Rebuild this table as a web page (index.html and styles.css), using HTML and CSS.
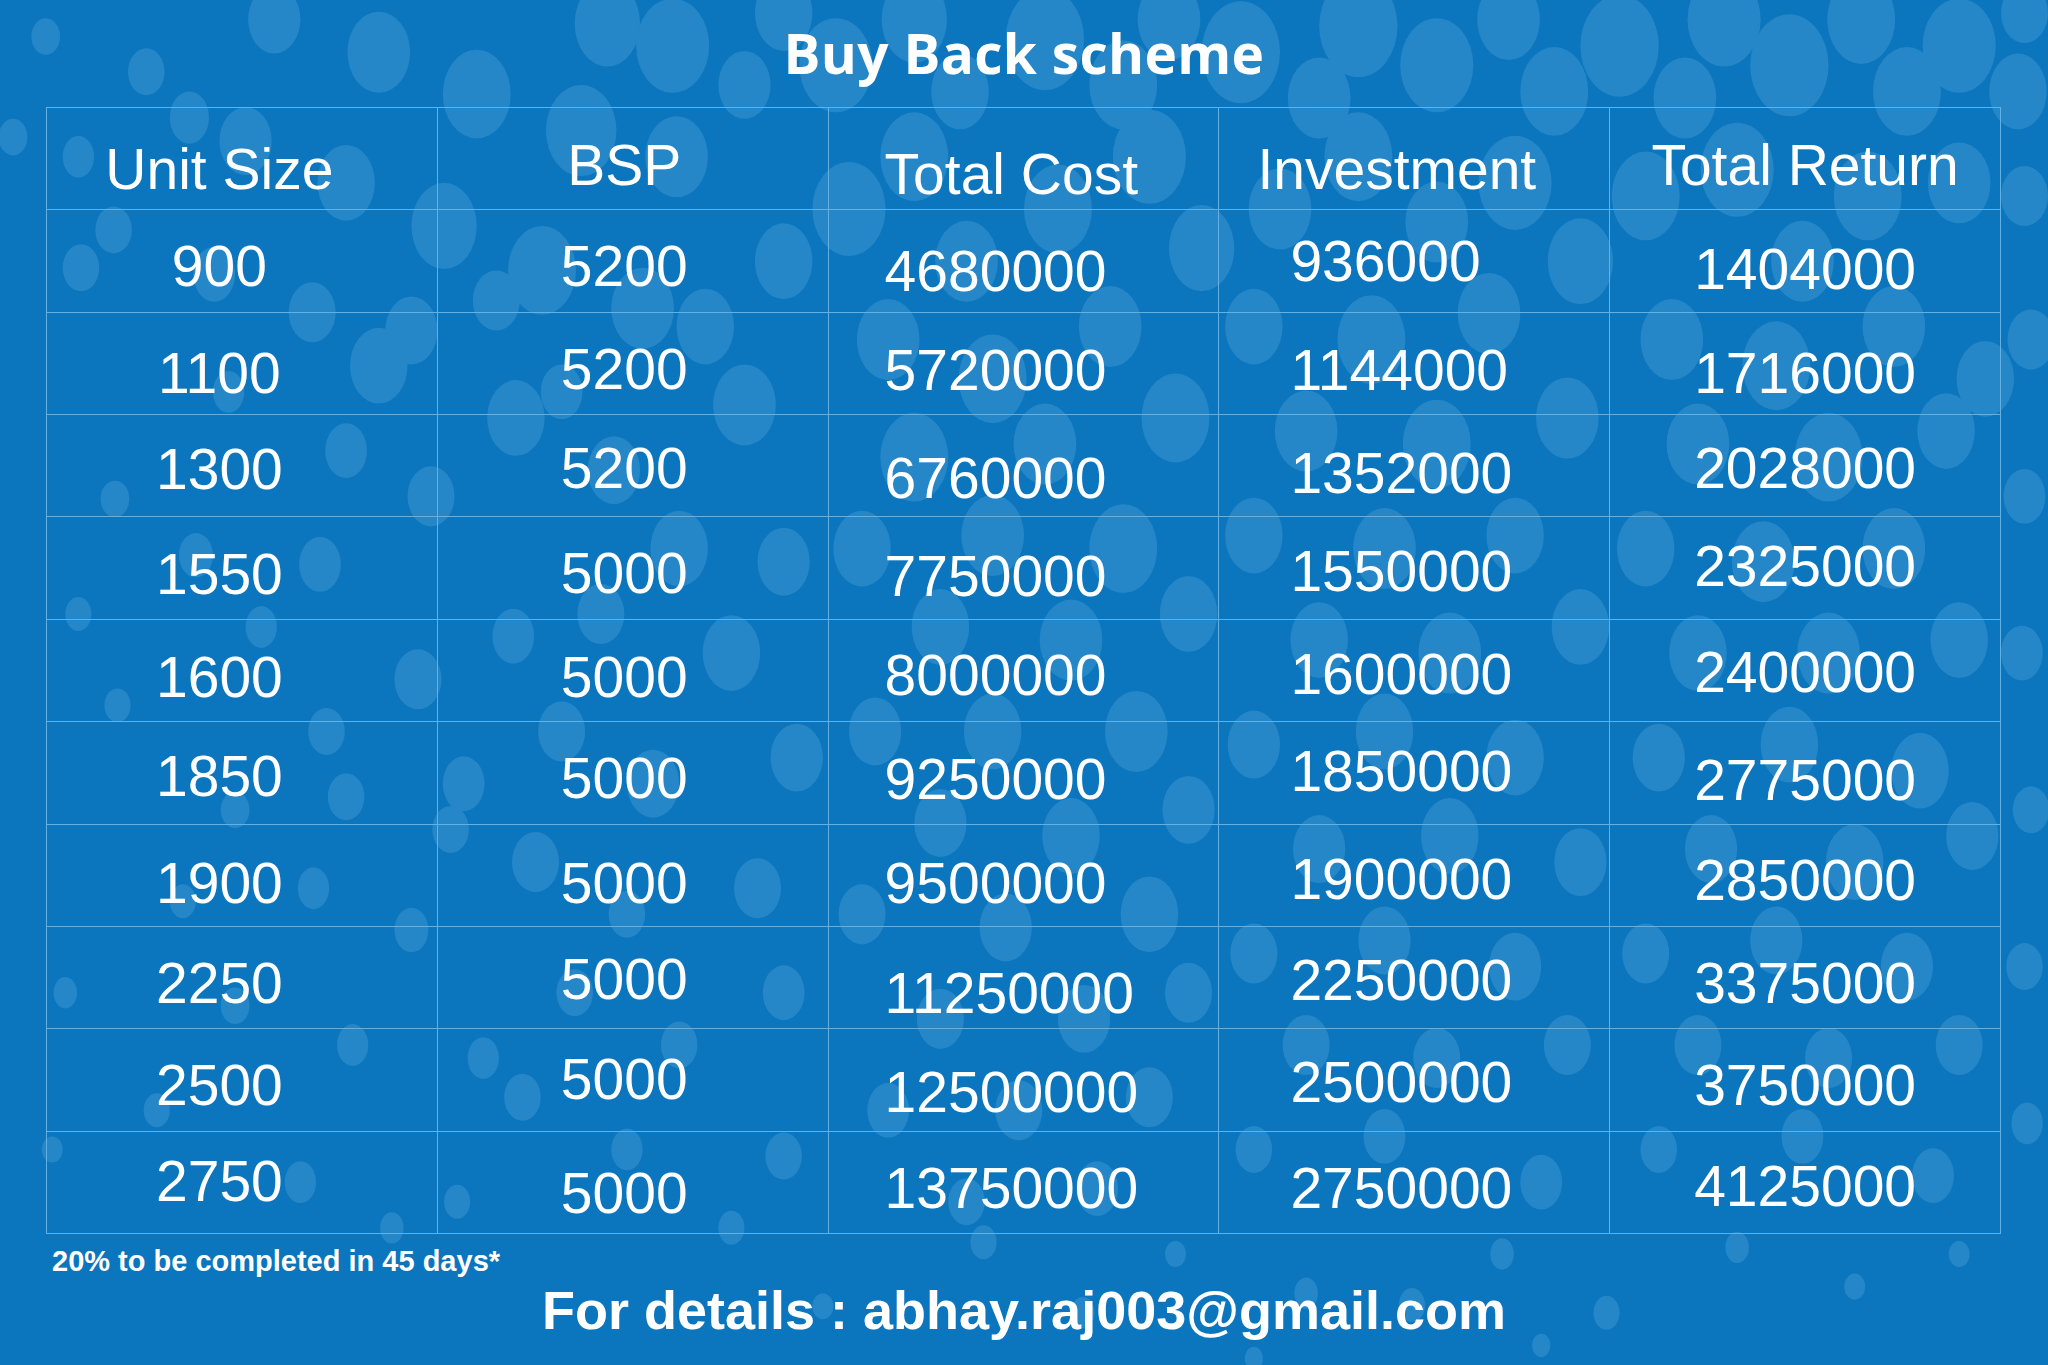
FILE: index.html
```html
<!DOCTYPE html>
<html lang="en">
<head>
<meta charset="utf-8">
<title>Buy Back scheme</title>
<link rel="stylesheet" href="styles.css">
</head>
<body>
<svg class="bubbles" viewBox="0 0 1568 1045" preserveAspectRatio="none" aria-hidden="true">
<g class="b">
<ellipse cx="35" cy="28" rx="11" ry="14"/><ellipse cx="112" cy="55" rx="14" ry="18"/><ellipse cx="210" cy="15" rx="20" ry="26"/><ellipse cx="290" cy="40" rx="24" ry="31"/><ellipse cx="365" cy="72" rx="26" ry="34"/><ellipse cx="465" cy="18" rx="25" ry="33"/><ellipse cx="515" cy="35" rx="28" ry="36"/><ellipse cx="445" cy="100" rx="27" ry="35"/><ellipse cx="600" cy="10" rx="22" ry="29"/><ellipse cx="570" cy="65" rx="20" ry="26"/><ellipse cx="640" cy="50" rx="28" ry="36"/><ellipse cx="700" cy="15" rx="25" ry="33"/><ellipse cx="735" cy="70" rx="22" ry="29"/><ellipse cx="800" cy="30" rx="30" ry="39"/><ellipse cx="860" cy="65" rx="26" ry="34"/><ellipse cx="895" cy="15" rx="24" ry="31"/><ellipse cx="950" cy="40" rx="30" ry="39"/><ellipse cx="1010" cy="75" rx="24" ry="31"/><ellipse cx="1040" cy="20" rx="30" ry="39"/><ellipse cx="1100" cy="50" rx="28" ry="36"/><ellipse cx="1155" cy="15" rx="24" ry="31"/><ellipse cx="1190" cy="70" rx="26" ry="34"/><ellipse cx="1240" cy="35" rx="30" ry="39"/><ellipse cx="1290" cy="75" rx="24" ry="31"/><ellipse cx="1320" cy="15" rx="28" ry="36"/><ellipse cx="1370" cy="50" rx="30" ry="39"/><ellipse cx="1425" cy="15" rx="26" ry="34"/><ellipse cx="1460" cy="70" rx="26" ry="34"/><ellipse cx="1500" cy="35" rx="28" ry="36"/><ellipse cx="1545" cy="70" rx="22" ry="29"/><ellipse cx="1550" cy="10" rx="18" ry="23"/><ellipse cx="10" cy="105" rx="11" ry="14"/><ellipse cx="60" cy="120" rx="12" ry="16"/><ellipse cx="145" cy="90" rx="15" ry="20"/><ellipse cx="188" cy="108" rx="20" ry="26"/><ellipse cx="265" cy="140" rx="22" ry="29"/><ellipse cx="340" cy="173" rx="25" ry="33"/><ellipse cx="415" cy="207" rx="26" ry="34"/><ellipse cx="492" cy="236" rx="24" ry="31"/><ellipse cx="518" cy="120" rx="24" ry="31"/><ellipse cx="87" cy="176" rx="14" ry="18"/><ellipse cx="164" cy="210" rx="16" ry="21"/><ellipse cx="239" cy="239" rx="18" ry="23"/><ellipse cx="315" cy="253" rx="20" ry="26"/>
<ellipse cx="62" cy="205" rx="14" ry="18"/><ellipse cx="290" cy="280" rx="22" ry="29"/><ellipse cx="175" cy="300" rx="12" ry="16"/><ellipse cx="88" cy="382" rx="11" ry="14"/><ellipse cx="265" cy="345" rx="16" ry="21"/><ellipse cx="150" cy="425" rx="13" ry="17"/><ellipse cx="245" cy="432" rx="16" ry="21"/><ellipse cx="60" cy="470" rx="10" ry="13"/><ellipse cx="200" cy="480" rx="12" ry="16"/><ellipse cx="320" cy="520" rx="18" ry="23"/><ellipse cx="250" cy="560" rx="14" ry="18"/><ellipse cx="90" cy="540" rx="10" ry="13"/><ellipse cx="265" cy="610" rx="14" ry="18"/><ellipse cx="180" cy="620" rx="11" ry="14"/><ellipse cx="140" cy="690" rx="10" ry="13"/><ellipse cx="240" cy="680" rx="12" ry="16"/><ellipse cx="315" cy="712" rx="13" ry="17"/><ellipse cx="50" cy="760" rx="9" ry="12"/><ellipse cx="180" cy="770" rx="11" ry="14"/><ellipse cx="270" cy="800" rx="12" ry="16"/><ellipse cx="120" cy="850" rx="10" ry="13"/><ellipse cx="40" cy="880" rx="8" ry="10"/><ellipse cx="230" cy="905" rx="12" ry="16"/><ellipse cx="300" cy="940" rx="9" ry="12"/>
<ellipse cx="380" cy="230" rx="18" ry="23"/><ellipse cx="395" cy="320" rx="22" ry="29"/><ellipse cx="330" cy="380" rx="18" ry="23"/><ellipse cx="430" cy="300" rx="16" ry="21"/><ellipse cx="540" cy="250" rx="22" ry="29"/><ellipse cx="600" cy="200" rx="22" ry="29"/><ellipse cx="570" cy="310" rx="24" ry="31"/><ellipse cx="470" cy="360" rx="20" ry="26"/><ellipse cx="520" cy="420" rx="22" ry="29"/><ellipse cx="393" cy="487" rx="16" ry="21"/><ellipse cx="600" cy="430" rx="20" ry="26"/><ellipse cx="460" cy="470" rx="18" ry="23"/><ellipse cx="560" cy="500" rx="22" ry="29"/><ellipse cx="355" cy="600" rx="16" ry="21"/><ellipse cx="430" cy="560" rx="18" ry="23"/><ellipse cx="500" cy="600" rx="20" ry="26"/><ellipse cx="610" cy="580" rx="20" ry="26"/><ellipse cx="345" cy="635" rx="14" ry="18"/><ellipse cx="410" cy="660" rx="18" ry="23"/><ellipse cx="480" cy="700" rx="14" ry="18"/><ellipse cx="580" cy="680" rx="18" ry="23"/><ellipse cx="440" cy="760" rx="14" ry="18"/><ellipse cx="370" cy="810" rx="12" ry="16"/><ellipse cx="520" cy="800" rx="14" ry="18"/><ellipse cx="600" cy="760" rx="16" ry="21"/><ellipse cx="400" cy="840" rx="14" ry="18"/><ellipse cx="480" cy="880" rx="12" ry="16"/><ellipse cx="600" cy="885" rx="14" ry="18"/><ellipse cx="350" cy="920" rx="10" ry="13"/><ellipse cx="560" cy="940" rx="10" ry="13"/>
<ellipse cx="650" cy="160" rx="28" ry="36"/><ellipse cx="700" cy="120" rx="26" ry="34"/><ellipse cx="740" cy="200" rx="24" ry="31"/><ellipse cx="810" cy="160" rx="26" ry="34"/><ellipse cx="880" cy="120" rx="28" ry="36"/><ellipse cx="920" cy="190" rx="25" ry="33"/><ellipse cx="680" cy="260" rx="24" ry="31"/><ellipse cx="760" cy="290" rx="26" ry="34"/><ellipse cx="850" cy="250" rx="24" ry="31"/><ellipse cx="700" cy="350" rx="26" ry="34"/><ellipse cx="800" cy="340" rx="24" ry="31"/><ellipse cx="900" cy="320" rx="26" ry="34"/><ellipse cx="660" cy="420" rx="22" ry="29"/><ellipse cx="760" cy="410" rx="24" ry="31"/><ellipse cx="860" cy="420" rx="26" ry="34"/><ellipse cx="720" cy="480" rx="22" ry="29"/><ellipse cx="820" cy="490" rx="24" ry="31"/><ellipse cx="910" cy="470" rx="22" ry="29"/><ellipse cx="670" cy="560" rx="20" ry="26"/><ellipse cx="760" cy="560" rx="22" ry="29"/><ellipse cx="870" cy="560" rx="24" ry="31"/><ellipse cx="720" cy="630" rx="20" ry="26"/><ellipse cx="820" cy="640" rx="22" ry="29"/><ellipse cx="910" cy="620" rx="20" ry="26"/><ellipse cx="660" cy="700" rx="18" ry="23"/><ellipse cx="770" cy="710" rx="20" ry="26"/><ellipse cx="880" cy="700" rx="22" ry="29"/><ellipse cx="720" cy="780" rx="18" ry="23"/><ellipse cx="830" cy="780" rx="20" ry="26"/><ellipse cx="910" cy="760" rx="18" ry="23"/><ellipse cx="680" cy="850" rx="16" ry="21"/><ellipse cx="780" cy="850" rx="18" ry="23"/><ellipse cx="880" cy="840" rx="18" ry="23"/><ellipse cx="740" cy="920" rx="14" ry="18"/><ellipse cx="840" cy="910" rx="16" ry="21"/>
<ellipse cx="980" cy="160" rx="24" ry="31"/><ellipse cx="1040" cy="120" rx="26" ry="34"/><ellipse cx="1100" cy="170" rx="24" ry="31"/><ellipse cx="1160" cy="140" rx="28" ry="36"/><ellipse cx="1210" cy="200" rx="25" ry="33"/><ellipse cx="960" cy="250" rx="22" ry="29"/><ellipse cx="1050" cy="260" rx="26" ry="34"/><ellipse cx="1140" cy="240" rx="24" ry="31"/><ellipse cx="1000" cy="330" rx="24" ry="31"/><ellipse cx="1100" cy="340" rx="26" ry="34"/><ellipse cx="1200" cy="320" rx="24" ry="31"/><ellipse cx="960" cy="410" rx="22" ry="29"/><ellipse cx="1060" cy="420" rx="24" ry="31"/><ellipse cx="1160" cy="410" rx="22" ry="29"/><ellipse cx="1010" cy="490" rx="22" ry="29"/><ellipse cx="1110" cy="500" rx="24" ry="31"/><ellipse cx="1210" cy="480" rx="22" ry="29"/><ellipse cx="960" cy="570" rx="20" ry="26"/><ellipse cx="1060" cy="560" rx="22" ry="29"/><ellipse cx="1160" cy="580" rx="22" ry="29"/><ellipse cx="1010" cy="650" rx="20" ry="26"/><ellipse cx="1110" cy="640" rx="22" ry="29"/><ellipse cx="1210" cy="660" rx="20" ry="26"/><ellipse cx="960" cy="730" rx="18" ry="23"/><ellipse cx="1060" cy="720" rx="20" ry="26"/><ellipse cx="1160" cy="740" rx="20" ry="26"/><ellipse cx="1000" cy="800" rx="18" ry="23"/><ellipse cx="1100" cy="810" rx="18" ry="23"/><ellipse cx="1200" cy="800" rx="18" ry="23"/><ellipse cx="960" cy="880" rx="14" ry="18"/><ellipse cx="1060" cy="870" rx="16" ry="21"/><ellipse cx="1180" cy="905" rx="16" ry="21"/>
<ellipse cx="1260" cy="150" rx="26" ry="34"/><ellipse cx="1330" cy="130" rx="28" ry="36"/><ellipse cx="1380" cy="200" rx="24" ry="31"/><ellipse cx="1430" cy="150" rx="26" ry="34"/><ellipse cx="1500" cy="140" rx="24" ry="31"/><ellipse cx="1280" cy="260" rx="24" ry="31"/><ellipse cx="1360" cy="280" rx="26" ry="34"/><ellipse cx="1450" cy="250" rx="24" ry="31"/><ellipse cx="1520" cy="290" rx="22" ry="29"/><ellipse cx="1300" cy="340" rx="24" ry="31"/><ellipse cx="1400" cy="350" rx="26" ry="34"/><ellipse cx="1490" cy="330" rx="22" ry="29"/><ellipse cx="1260" cy="420" rx="22" ry="29"/><ellipse cx="1350" cy="430" rx="24" ry="31"/><ellipse cx="1450" cy="420" rx="24" ry="31"/><ellipse cx="1300" cy="500" rx="22" ry="29"/><ellipse cx="1400" cy="500" rx="24" ry="31"/><ellipse cx="1500" cy="490" rx="22" ry="29"/><ellipse cx="1270" cy="580" rx="20" ry="26"/><ellipse cx="1370" cy="570" rx="22" ry="29"/><ellipse cx="1470" cy="590" rx="22" ry="29"/><ellipse cx="1310" cy="650" rx="20" ry="26"/><ellipse cx="1420" cy="660" rx="22" ry="29"/><ellipse cx="1510" cy="640" rx="20" ry="26"/><ellipse cx="1260" cy="730" rx="18" ry="23"/><ellipse cx="1360" cy="720" rx="20" ry="26"/><ellipse cx="1460" cy="740" rx="20" ry="26"/><ellipse cx="1300" cy="800" rx="18" ry="23"/><ellipse cx="1400" cy="810" rx="18" ry="23"/><ellipse cx="1500" cy="800" rx="18" ry="23"/><ellipse cx="1270" cy="880" rx="14" ry="18"/><ellipse cx="1380" cy="870" rx="16" ry="21"/><ellipse cx="1480" cy="900" rx="16" ry="21"/>
<ellipse cx="1550" cy="150" rx="18" ry="23"/><ellipse cx="1555" cy="260" rx="18" ry="23"/><ellipse cx="1550" cy="380" rx="16" ry="21"/><ellipse cx="1548" cy="500" rx="16" ry="21"/><ellipse cx="1555" cy="620" rx="14" ry="18"/><ellipse cx="1550" cy="740" rx="14" ry="18"/><ellipse cx="1552" cy="860" rx="12" ry="16"/>
<ellipse cx="630" cy="1000" rx="8" ry="10"/><ellipse cx="753" cy="951" rx="10" ry="13"/><ellipse cx="829" cy="1005" rx="9" ry="12"/><ellipse cx="900" cy="960" rx="8" ry="10"/><ellipse cx="1000" cy="990" rx="9" ry="12"/><ellipse cx="1081" cy="999" rx="10" ry="13"/><ellipse cx="1150" cy="960" rx="9" ry="12"/><ellipse cx="1230" cy="1005" rx="10" ry="13"/><ellipse cx="1330" cy="955" rx="9" ry="12"/><ellipse cx="1420" cy="985" rx="8" ry="10"/><ellipse cx="1500" cy="960" rx="8" ry="10"/><ellipse cx="1180" cy="1030" rx="7" ry="9"/><ellipse cx="960" cy="1040" rx="7" ry="9"/>
</g>
</svg>

<main class="page">
  <h1 class="title">Buy Back scheme</h1>

  <div class="grid">
    <div class="cell c1"><span class="s11">Unit Size</span></div>
    <div class="cell c2"><span class="s7">BSP</span></div>
    <div class="cell c3"><span class="s16">Total Cost</span></div>
    <div class="cell c4 head4"><span class="s11">Investment</span></div>
    <div class="cell c5"><span class="s7">Total Return</span></div>

    <div class="cell c1"><span class="s6">900</span></div>
    <div class="cell c2"><span class="s6">5200</span></div>
    <div class="cell c3"><span class="s11">4680000</span></div>
    <div class="cell c4"><span class="s1">936000</span></div>
    <div class="cell c5"><span class="s9">1404000</span></div>

    <div class="cell c1"><span class="s10">1100</span></div>
    <div class="cell c2"><span class="s6">5200</span></div>
    <div class="cell c3"><span class="s7">5720000</span></div>
    <div class="cell c4"><span class="s7">1144000</span></div>
    <div class="cell c5"><span class="s10">1716000</span></div>

    <div class="cell c1"><span class="s4">1300</span></div>
    <div class="cell c2"><span class="s3">5200</span></div>
    <div class="cell c3"><span class="s13">6760000</span></div>
    <div class="cell c4"><span class="s8">1352000</span></div>
    <div class="cell c5"><span class="s3">2028000</span></div>

    <div class="cell c1"><span class="s7">1550</span></div>
    <div class="cell c2"><span class="s6">5000</span></div>
    <div class="cell c3"><span class="s9">7750000</span></div>
    <div class="cell c4"><span class="s4">1550000</span></div>
    <div class="cell c5"><span class="sm1">2325000</span></div>

    <div class="cell c1"><span class="s7">1600</span></div>
    <div class="cell c2"><span class="s7">5000</span></div>
    <div class="cell c3"><span class="s5">8000000</span></div>
    <div class="cell c4"><span class="s4">1600000</span></div>
    <div class="cell c5"><span class="s2">2400000</span></div>

    <div class="cell c1"><span class="s4">1850</span></div>
    <div class="cell c2"><span class="s6">5000</span></div>
    <div class="cell c3"><span class="s7">9250000</span></div>
    <div class="cell c4"><span class="sm1">1850000</span></div>
    <div class="cell c5"><span class="s8">2775000</span></div>

    <div class="cell c1"><span class="s9">1900</span></div>
    <div class="cell c2"><span class="s9">5000</span></div>
    <div class="cell c3"><span class="s9">9500000</span></div>
    <div class="cell c4"><span class="s5">1900000</span></div>
    <div class="cell c5"><span class="s6">2850000</span></div>

    <div class="cell c1"><span class="s6">2250</span></div>
    <div class="cell c2"><span class="s2">5000</span></div>
    <div class="cell c3"><span class="s16">11250000</span></div>
    <div class="cell c4"><span class="s3">2250000</span></div>
    <div class="cell c5"><span class="s6">3375000</span></div>

    <div class="cell c1"><span class="s6">2500</span></div>
    <div class="cell c2"><span class="s0">5000</span></div>
    <div class="cell c3"><span class="s13">12500000</span></div>
    <div class="cell c4"><span class="s3">2500000</span></div>
    <div class="cell c5"><span class="s6">3750000</span></div>

    <div class="cell c1"><span class="sm1">2750</span></div>
    <div class="cell c2"><span class="s11">5000</span></div>
    <div class="cell c3"><span class="s6">13750000</span></div>
    <div class="cell c4"><span class="s6">2750000</span></div>
    <div class="cell c5"><span class="s4">4125000</span></div>
  </div>

  <p class="note">20% to be completed in 45 days*</p>
  <p class="contact">For details : abhay.raj003@gmail.com</p>
</main>
</body>
</html>
```

FILE: styles.css
```css
* { box-sizing: border-box; }

html, body {
  margin: 0;
  padding: 0;
}

body {
  width: 2048px;
  height: 1365px;
  overflow: hidden;
  position: relative;
  background: #0b76bd;
  color: #ffffff;
  font-family: "Liberation Sans", Arial, sans-serif;
}

.bubbles {
  position: absolute;
  left: 0;
  top: 0;
  width: 2048px;
  height: 1365px;
  z-index: 0;
}

.b { fill: #2587c8; }

.page {
  position: relative;
  z-index: 1;
  display: flex;
  flex-direction: column;
  align-items: center;
}

.title {
  margin: 23px 0 0;
  height: 60px;
  line-height: 60px;
  font-family: "Open Sans", "Noto Sans", sans-serif;
  font-weight: 700;
  font-size: 55px;
  letter-spacing: 0.3px;
}

.grid {
  margin-top: 24px;
  align-self: flex-start;
  margin-left: 46px;
  width: 1955px;
  display: grid;
  grid-template-columns: repeat(5, 1fr);
  grid-auto-rows: 102.36px;
  border-top: 1px solid #63b0e2;
  border-left: 1px solid #63b0e2;
}

.cell {
  display: flex;
  align-items: center;
  justify-content: center;
  border-right: 1px solid #63b0e2;
  border-bottom: 1px solid #63b0e2;
  font-size: 57px;
  white-space: nowrap;
}

.cell span { display: block; line-height: 1.149; }

.c1 { padding-right: 45px; }
.c2 { padding-right: 17px; }
.c3 { justify-content: flex-start; padding-left: 56px; }
.c4 { justify-content: flex-start; padding-left: 71px; }
.c4.head4 { padding-left: 38px; }

.sm1 { margin-top: -2px; }
.s0 { margin-top: 0; }
.s1 { margin-top: 2px; }
.s2 { margin-top: 4px; }
.s3 { margin-top: 6px; }
.s4 { margin-top: 8px; }
.s5 { margin-top: 10px; }
.s6 { margin-top: 12px; }
.s7 { margin-top: 14px; }
.s8 { margin-top: 16px; }
.s9 { margin-top: 18px; }
.s10 { margin-top: 20px; }
.s11 { margin-top: 22px; }
.s13 { margin-top: 26px; }
.s16 { margin-top: 32px; }

.note {
  align-self: flex-start;
  margin: 11px 0 0 52px;
  height: 32px;
  line-height: 32px;
  font-weight: 700;
  font-size: 29px;
}

.contact {
  margin: 3px 0 0;
  height: 60px;
  line-height: 60px;
  font-weight: 700;
  font-size: 54px;
}
```
